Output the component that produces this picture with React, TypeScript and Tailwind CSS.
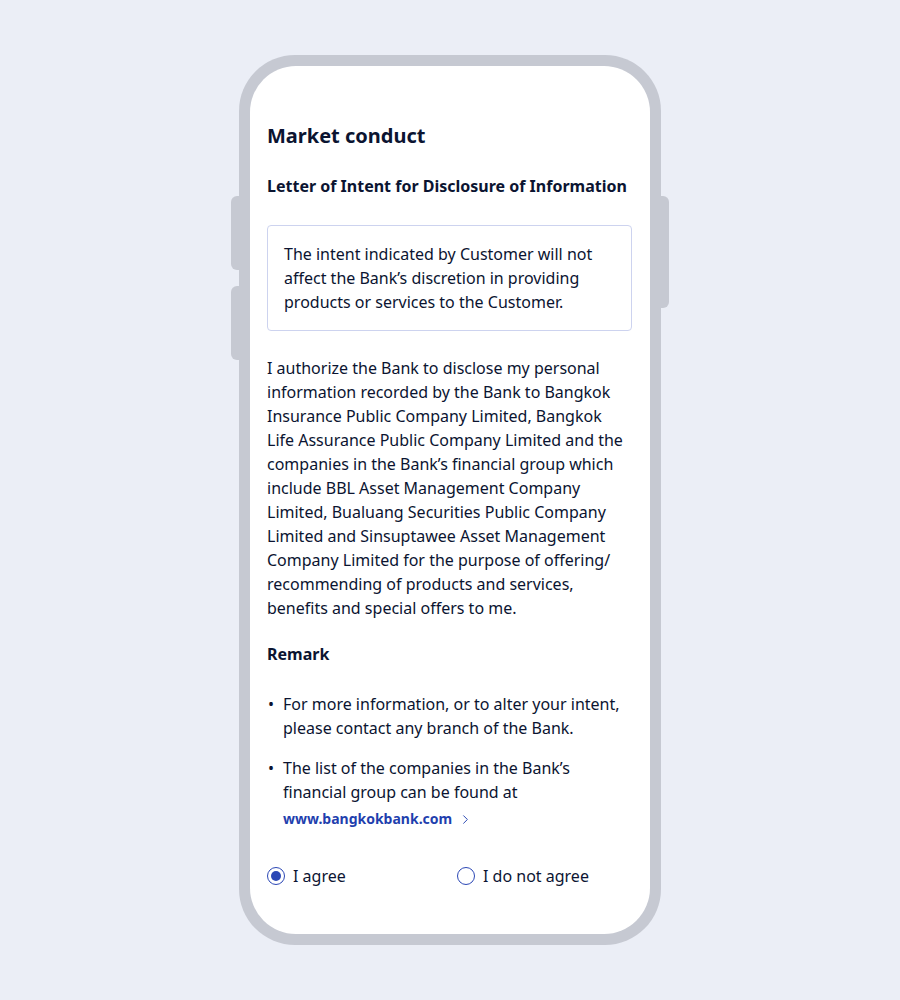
import { ChevronRight } from "lucide-react";

const font = { fontFamily: '"Noto Sans", "Liberation Sans", sans-serif' };

function Radio({ checked, label }: { checked: boolean; label: string }) {
  return (
    <label className="flex items-center gap-2 h-6 text-[16px] text-[#0c1533]">
      <span className="flex items-center justify-center w-[18px] h-[18px] rounded-full border-[1.5px] border-[#2b47b5]">
        {checked && <span className="w-[10px] h-[10px] rounded-full bg-[#2b47b5]" />}
      </span>
      {label}
    </label>
  );
}

export default function App() {
  return (
    <div className="min-h-[1000px] bg-[#ebeef6] flex justify-center pt-[55px]" style={font}>
      <div className="relative w-[422px] h-[890px]">
        <div className="absolute left-[-8px] top-[141px] w-[10px] h-[74px] rounded-l-[6px] bg-[#c6c9d2]" />
        <div className="absolute left-[-8px] top-[231px] w-[10px] h-[74px] rounded-l-[6px] bg-[#c6c9d2]" />
        <div className="absolute right-[-8px] top-[141px] w-[10px] h-[112px] rounded-r-[6px] bg-[#c6c9d2]" />
        <div className="relative h-full rounded-[56px] bg-[#c6c9d2] p-[11px]">
          <div className="h-full rounded-[46px] bg-white pl-[17px] pr-[18px] pt-[56px] text-[#0b1431]">
            <h1 className="text-[20px] leading-7 font-bold">Market conduct</h1>
            <h2 className="mt-6 text-[16px] leading-6 font-bold">
              Letter of Intent for Disclosure of Information
            </h2>
            <div className="mt-[27px] rounded-[4px] border border-[#cdd3ef] px-4 py-4 text-[16px] leading-6">
              The intent indicated by Customer will not affect the Bank’s discretion in providing
              products or services to the Customer.
            </div>
            <p className="mt-[25px] text-[16px] leading-6">
              I authorize the Bank to disclose my personal information recorded by the Bank to
              Bangkok Insurance Public Company Limited, Bangkok Life Assurance Public Company
              Limited and the companies in the Bank’s financial group which include BBL Asset
              Management Company Limited, Bualuang Securities Public Company Limited and
              Sinsuptawee Asset Management Company Limited for the purpose of offering/
              recommending of products and services, benefits and special offers to me.
            </p>
            <h3 className="mt-[22px] text-[16px] leading-6 font-bold">Remark</h3>
            <ul className="mt-[26px] flex flex-col gap-4 text-[16px] leading-6">
              <li className="flex">
                <span className="w-4 shrink-0 pl-[1px]">•</span>
                <span>For more information, or to alter your intent, please contact any branch of the Bank.</span>
              </li>
              <li className="flex">
                <span className="w-4 shrink-0 pl-[1px]">•</span>
                <div>
                  <span>The list of the companies in the Bank’s financial group can be found at</span>
                  <a className="mt-[3px] flex items-center gap-[6px] text-[14px] leading-6 font-bold text-[#1f3fae]">
                    www.bangkokbank.com
                    <ChevronRight size={15} strokeWidth={1.5} />
                  </a>
                </div>
              </li>
            </ul>
            <div className="mt-[33px] flex">
              <div className="w-[190px]">
                <Radio checked label="I agree" />
              </div>
              <Radio checked={false} label="I do not agree" />
            </div>
          </div>
        </div>
      </div>
    </div>
  );
}
